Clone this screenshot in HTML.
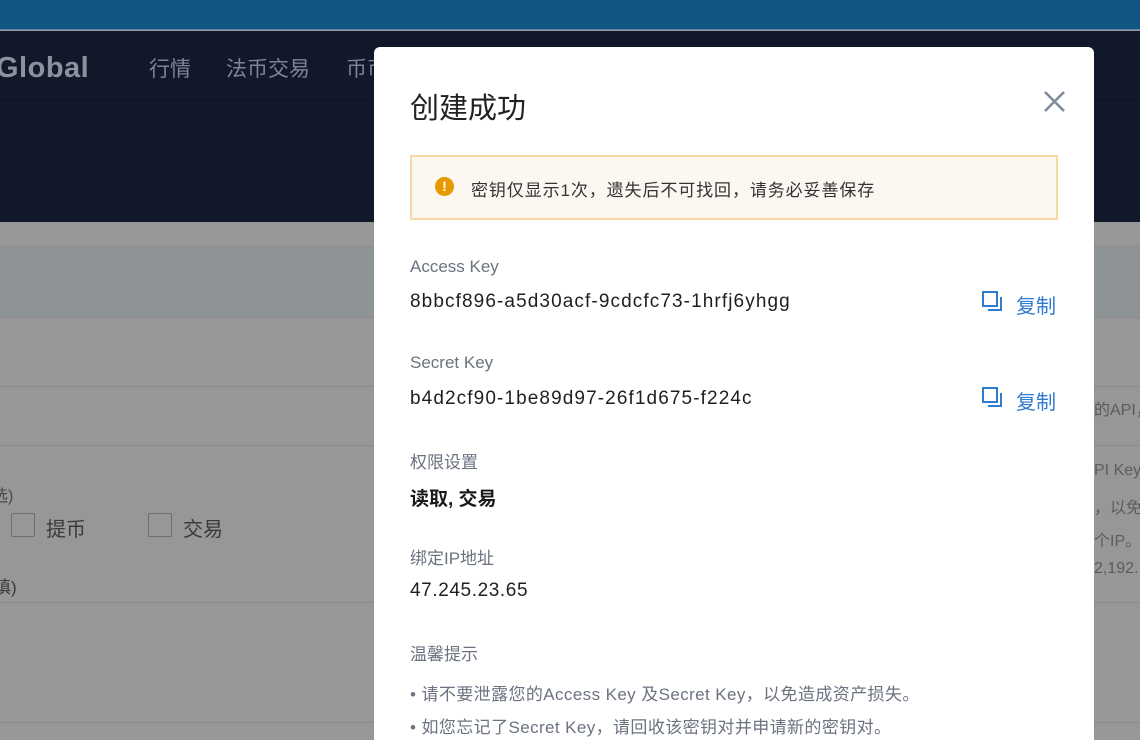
<!DOCTYPE html>
<html><head><meta charset="utf-8"><style>
*{margin:0;padding:0;box-sizing:border-box}
html,body{width:1140px;height:740px;overflow:hidden}
body{position:relative;background:#979797;font-family:"Liberation Sans","Noto Sans CJK SC",sans-serif}
.abs{position:absolute;white-space:nowrap}
.top{left:0;top:0;width:1140px;height:30px;background:#115680;border-bottom:1px solid #5a8aa6}
.nav{left:0;top:31px;width:1140px;height:70px;background:#111829;border-bottom:1px solid #0d1220}
.banner{left:0;top:101px;width:1140px;height:121px;background:#111829}
.band{left:0;top:246px;width:1140px;height:72px;background:#8e9396;border-top:1px solid #8c8c8c;border-bottom:1px solid #8a8a8a}
.line{left:0;width:1140px;height:1px;background:#8a8a8a}
.navt{color:#7d8595;font-size:21px;top:53px}
.bgt{color:#3a3a3a;font-size:20px}
.cb{width:24px;height:24px;border:1px solid #6e6e6e;border-radius:2px}
.rt{color:#5c5c5c;font-size:16px;left:1094px}
.modal{left:374px;top:47px;width:720px;height:693px;background:#fff;border-radius:6px 6px 0 0}
.lbl{color:#6b7280;font-size:16px;left:410px}
.val{color:#1f1f1f;font-size:19px;left:410px}
.copy{color:#2f7ad3;font-size:20px;left:1016px}
.ci{left:982px;width:21px;height:21px}
</style></head><body>
<div class="abs top"></div>
<div class="abs nav"></div>
<div class="abs banner"></div>
<div class="abs" style="left:-4px;top:52px;color:#8b929e;font-size:29px;font-weight:bold;letter-spacing:0.5px">Global</div>
<div class="abs navt" style="left:149px">行情</div>
<div class="abs navt" style="left:226px">法币交易</div>
<div class="abs navt" style="left:346px">币币</div>
<div class="abs band"></div>
<div class="abs line" style="top:386px"></div>
<div class="abs line" style="top:445px"></div>
<div class="abs line" style="top:602px"></div>
<div class="abs line" style="top:722px"></div>
<div class="abs" style="left:-8px;top:482px;color:#4a4a4a;font-size:16px">选)</div>
<div class="abs cb" style="left:11px;top:513px"></div>
<div class="abs bgt" style="left:46px;top:513px">提币</div>
<div class="abs cb" style="left:148px;top:513px"></div>
<div class="abs bgt" style="left:183px;top:513px">交易</div>
<div class="abs" style="left:-6px;top:573px;color:#3a3a3a;font-size:17px">填)</div>
<div class="abs rt" style="top:396px">的API，</div>
<div class="abs rt" style="top:462px">PI Key</div>
<div class="abs rt" style="top:494px">，以免</div>
<div class="abs rt" style="top:527px">个IP。</div>
<div class="abs rt" style="top:560px">2,192.</div>

<div class="abs modal"></div>
<div class="abs" style="left:410px;top:85px;font-size:29px;color:#222">创建成功</div>
<svg class="abs" style="left:1043px;top:90px" width="23" height="23" viewBox="0 0 23 23"><path d="M2 2L21 21M21 2L2 21" stroke="#7d8b9c" stroke-width="2.6"/></svg>
<div class="abs" style="left:410px;top:155px;width:648px;height:65px;background:#fcf7f1;border:2px solid #f5d9a0"></div>
<div class="abs" style="left:435px;top:177px;width:19px;height:19px;border-radius:50%;background:#e69a00;color:#fff;font-size:14px;font-weight:bold;text-align:center;line-height:19px">!</div>
<div class="abs" style="left:471px;top:176px;font-size:17px;color:#333;letter-spacing:0.9px">密钥仅显示1次，遗失后不可找回，请务必妥善保存</div>

<div class="abs lbl" style="top:257px;font-size:17px">Access Key</div>
<div class="abs val" style="top:291px;letter-spacing:1.1px">8bbcf896-a5d30acf-9cdcfc73-1hrfj6yhgg</div>
<svg class="abs ci" style="top:291px" viewBox="0 0 21 21"><rect x="1" y="1" width="14" height="14" fill="none" stroke="#2f7ad3" stroke-width="2"/><path d="M19 6V19H6" fill="none" stroke="#2f7ad3" stroke-width="2"/></svg>
<div class="abs copy" style="top:290px">复制</div>

<div class="abs lbl" style="top:353px;font-size:17px">Secret Key</div>
<div class="abs val" style="top:388px;letter-spacing:1.1px">b4d2cf90-1be89d97-26f1d675-f224c</div>
<svg class="abs ci" style="top:387px" viewBox="0 0 21 21"><rect x="1" y="1" width="14" height="14" fill="none" stroke="#2f7ad3" stroke-width="2"/><path d="M19 6V19H6" fill="none" stroke="#2f7ad3" stroke-width="2"/></svg>
<div class="abs copy" style="top:386px">复制</div>

<div class="abs lbl" style="top:448px;font-size:17px">权限设置</div>
<div class="abs val" style="top:484px;font-weight:bold;color:#1a1a1a">读取, 交易</div>
<div class="abs lbl" style="top:544px;font-size:17px">绑定IP地址</div>
<div class="abs val" style="top:580px;letter-spacing:0.6px">47.245.23.65</div>
<div class="abs lbl" style="top:640px;font-size:17px">温馨提示</div>
<div class="abs lbl" style="top:680px;font-size:17px;letter-spacing:0.4px">• 请不要泄露您的Access Key 及Secret Key，以免造成资产损失。</div>
<div class="abs lbl" style="top:713px;font-size:17px;letter-spacing:0.4px">• 如您忘记了Secret Key，请回收该密钥对并申请新的密钥对。</div>
</body></html>
